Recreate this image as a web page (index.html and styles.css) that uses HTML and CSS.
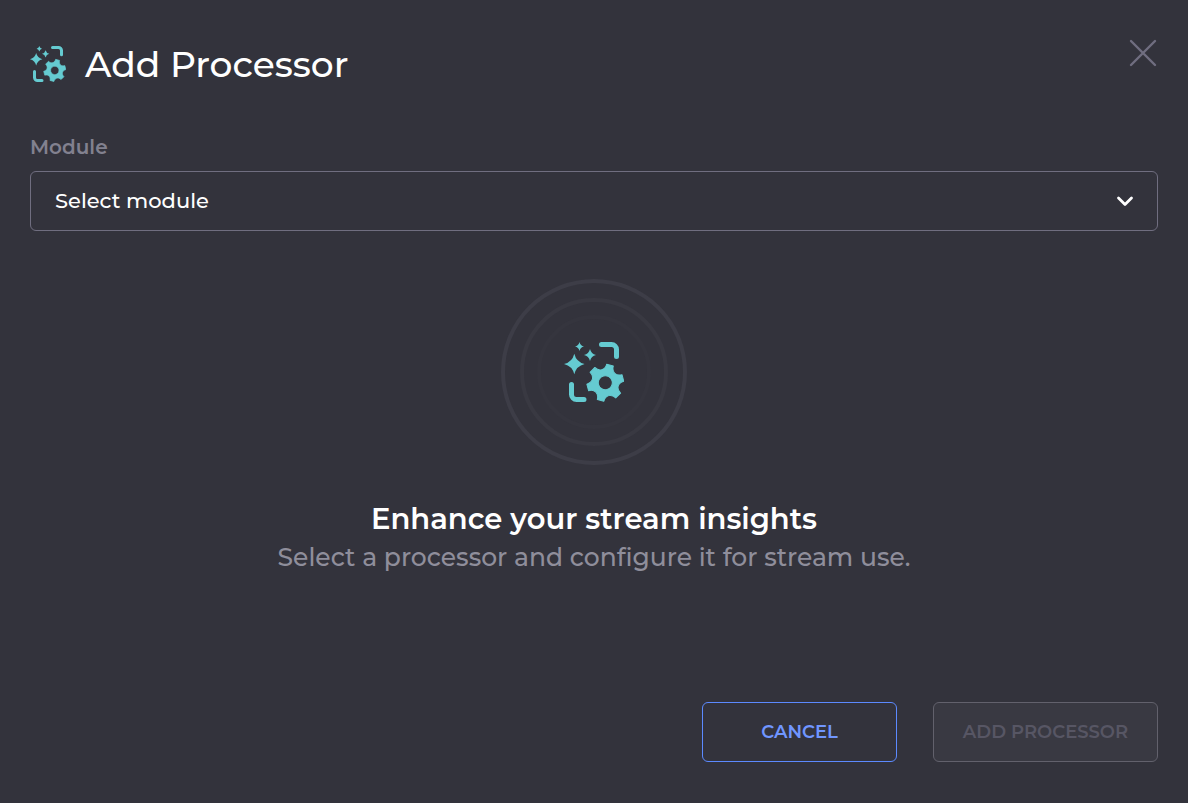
FILE: index.html
```html
<!DOCTYPE html>
<html lang="en">
<head>
<meta charset="utf-8">
<meta name="viewport" content="width=device-width, initial-scale=1">
<title>Add Processor</title>
<link rel="stylesheet" href="styles.css">
</head>
<body>
<svg class="sprite" aria-hidden="true">
  <symbol id="processor" viewBox="0 0 60 60">
    <path d="M37.5 2.5H47.5a5 5 0 0 1 5 5V14.5M7.5 42.5V52.5a5 5 0 0 0 5 5H20" fill="none" stroke="currentColor" stroke-width="5" stroke-linecap="round"/>
    <path d="M10.3 11.7Q12.3 20 20.6 22Q12.3 24 10.3 32.3Q8.3 24 0 22Q8.3 20 10.3 11.7Z" fill="currentColor"/>
    <path d="M26 7Q27.2 11.8 32 13Q27.2 14.2 26 19Q24.8 14.2 20 13Q24.8 11.8 26 7Z" fill="currentColor"/>
    <path d="M15.5 0Q16.4 3.6 20 4.5Q16.4 5.4 15.5 9Q14.6 5.4 11 4.5Q14.6 3.6 15.5 0Z" fill="currentColor"/>
    <g transform="translate(41.3 40.7) rotate(-15)">
      <path fill="currentColor" fill-rule="evenodd" stroke="currentColor" stroke-width="1" stroke-linejoin="round" d="M18.2 3.4C11.9 3.4 8.9 8.6 12.05 14.06L6.15 17.46C3 12 -3 12 -6.15 17.46L-12.05 14.06C-8.9 8.6 -11.9 3.4 -18.2 3.4L-18.2 -3.4C-11.9 -3.4 -8.9 -8.6 -12.05 -14.06L-6.15 -17.46C-3 -12 3 -12 6.15 -17.46L12.05 -14.06C8.9 -8.6 11.9 -3.4 18.2 -3.4ZM7 0A7 7 0 1 0 -7 0A7 7 0 1 0 7 0Z"/>
    </g>
  </symbol>
</svg>
<main class="dialog" role="dialog" aria-labelledby="dialog-title">
  <header class="dialog-header">
    <svg class="title-icon" aria-hidden="true"><use href="#processor"/></svg>
    <h1 class="title" id="dialog-title">Add Processor</h1>
    <button class="close" type="button" aria-label="Close">
      <svg class="close-icon" viewBox="0 0 30 30" aria-hidden="true"><path d="M3 3L27 27M27 3L3 27" fill="none" stroke="currentColor" stroke-width="2.400" stroke-linecap="round"/></svg>
    </button>
  </header>
  <div class="field">
    <label class="label" for="module">Module</label>
    <div class="select-box">
      <select class="select" id="module"><option>Select module</option></select>
      <svg class="chevron" viewBox="0 0 18 12" aria-hidden="true"><path d="M2.5 3L9 9.500L15.500 3" fill="none" stroke="currentColor" stroke-width="2.800" stroke-linecap="round" stroke-linejoin="round"/></svg>
    </div>
  </div>
  <section class="empty">
    <div class="ring ring-outer"><div class="ring ring-middle"><div class="ring ring-inner">
      <svg class="empty-icon" aria-hidden="true"><use href="#processor"/></svg>
    </div></div></div>
    <h2 class="empty-title">Enhance your stream insights</h2>
    <p class="empty-text">Select a processor and configure it for stream use.</p>
  </section>
  <footer class="actions">
    <button class="button cancel" type="button">CANCEL</button>
    <button class="button submit" type="button" disabled>ADD PROCESSOR</button>
  </footer>
</main>
</body>
</html>
```
FILE: styles.css
```css
* { box-sizing: border-box; }
body {
  margin: 0;
  background: #33333c;
  color: #fff;
  font-family: Gotham, Montserrat, Inter, sans-serif;
}
.sprite { position: absolute; width: 0; height: 0; }
.dialog {
  display: flex;
  flex-direction: column;
  min-height: 100vh;
  padding: 38px 30px 41px;
}
.dialog-header { display: flex; align-items: center; height: 52px; }
.title-icon { width: 36px; height: 36px; color: #65cbd1; }
.title { margin: 0 auto 0 19px; font-size: 36px; line-height: 48px; font-weight: 500; }
.close {
  display: flex;
  align-self: flex-start;
  padding: 0;
  border: 0;
  background: none;
  color: #706e80;
}
.close-icon { width: 30px; height: 30px; }
.field { display: flex; flex-direction: column; gap: 10px; margin-top: 43px; }
.label { font-size: 20px; line-height: 28px; font-weight: 600; color: #82818f; }
.select-box { display: grid; align-items: center; }
.select-box > * { grid-area: 1 / 1; }
.select {
  appearance: none;
  width: 100%;
  height: 60px;
  padding: 0 56px 0 24px;
  border: 1px solid #706e80;
  border-radius: 6px;
  background: transparent;
  color: #fff;
  font: 500 21px/28px Gotham, Montserrat, Inter, sans-serif;
}
.chevron { justify-self: end; width: 18px; height: 12px; margin-right: 24px; pointer-events: none; }
.empty {
  display: flex;
  flex: 1;
  flex-direction: column;
  align-items: center;
  padding-top: 48px;
  text-align: center;
}
.ring { display: grid; place-items: center; border-radius: 50%; border: 4px solid; }
.ring-outer { width: 186px; height: 186px; border-color: #3d3d47; }
.ring-middle { width: 148px; height: 148px; border-color: #393942; }
.ring-inner { width: 114px; height: 114px; border-color: #35353e; }
.empty-icon { width: 60px; height: 60px; color: #65cbd1; }
.empty-title { margin: 34px 0 0; font-size: 29px; line-height: 40px; font-weight: 600; }
.empty-text { margin: 0; font-size: 25px; line-height: 36px; font-weight: 500; color: #8f8e9b; }
.actions { display: flex; justify-content: flex-end; gap: 36px; }
.button {
  height: 60px;
  padding: 0 24px;
  border: 1px solid;
  border-radius: 6px;
  background: transparent;
  font: 600 18px/24px Gotham, Montserrat, Inter, sans-serif;
}
.cancel { min-width: 195px; border-color: #5c8aff; color: #7096ff; }
.submit { min-width: 225px; border-color: #62616c; background: #393942; color: #575664; }
```
